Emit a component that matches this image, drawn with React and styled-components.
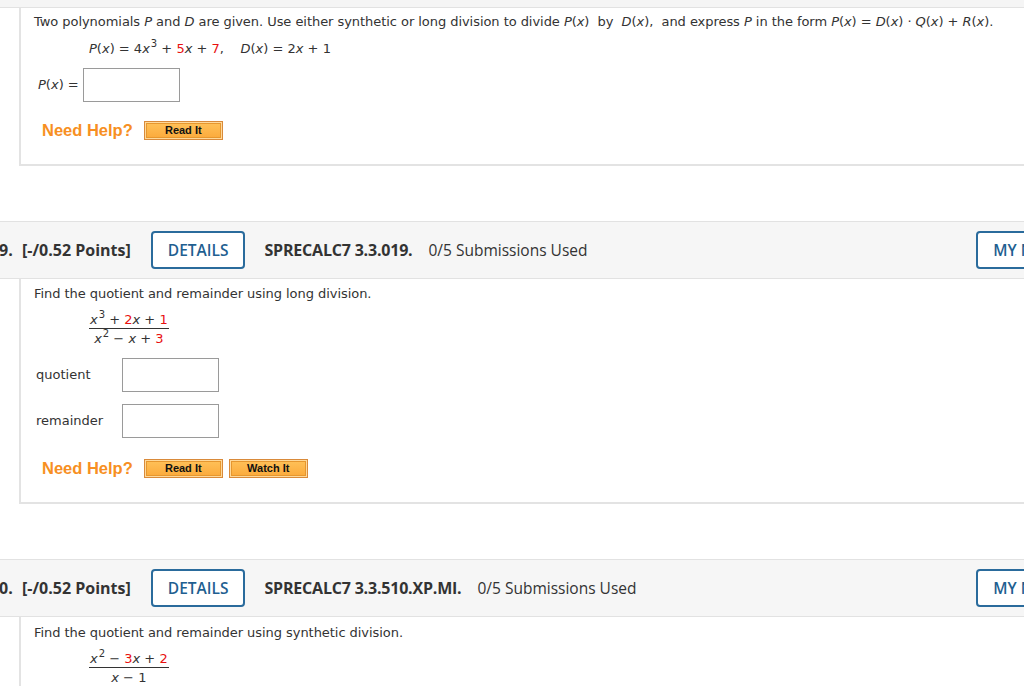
import React from "react"
import styled, { createGlobalStyle } from "styled-components"

const Global = createGlobalStyle`
  body {
    margin: 0;
    padding: 0;
    background: #fff;
    overflow: hidden;
    font-family: "DejaVu Sans", Verdana, sans-serif;
    color: #333;
  }
`

const Page = styled.div`
  width: 1024px;
  height: 687px;
  overflow: hidden;
`

const TopStrip = styled.div`
  height: 7px;
  background: #f5f5f5;
  border-bottom: 1px solid #e2e2e2;
`

const Card = styled.div`
  margin-left: 19px;
  border-left: 2px solid #e3e3e3;
  border-bottom: ${(p) => (p.$open ? "none" : "2px solid #e3e3e3")};
  padding: ${(p) => p.$pt || 5}px 0 ${(p) => (p.$open ? 0 : 24)}px 13px;
  margin-bottom: ${(p) => (p.$open ? 0 : 55)}px;
  font-size: 13px;
  line-height: 18px;
`

const Text = styled.div`
  white-space: nowrap;
  letter-spacing: -0.05px;
`

const Formula = styled.div`
  margin: 9px 0 0 55px;
  white-space: nowrap;
`

const V = styled.i`
  font-style: italic;
`

const Red = styled.span`
  color: #e8100f;
`

const Sup = styled.sup`
  font-size: 10px;
  line-height: 0;
  vertical-align: 6px;
  margin-left: 1px;
`

const Frac = styled.div`
  display: inline-flex;
  flex-direction: column;
  align-items: center;
  margin: ${(p) => p.$mt || 8}px 0 0 55px;
  line-height: 16px;
  white-space: nowrap;
`

const Num = styled.div`
  border-bottom: 1px solid #333;
  padding: 1px 1px 0;
`

const Den = styled.div`
  padding-top: 2px;
`

const AnswerRow = styled.div`
  display: flex;
  align-items: center;
  margin-top: ${(p) => p.$mt}px;
  margin-left: ${(p) => p.$ml || 2}px;
`

const Label = styled.span`
  width: ${(p) => (p.$w ? `${p.$w}px` : "auto")};
  margin-right: ${(p) => p.$gap || 0}px;
  font-size: 13px;
`

const Box = styled.div`
  width: 95px;
  height: 32px;
  border: 1px solid #9a9a9a;
  background: #fff;
`

const HelpRow = styled.div`
  display: flex;
  align-items: center;
  gap: 6px;
  margin: ${(p) => p.$mt}px 0 0 8px;
  height: 20px;
`

const NeedHelp = styled.span`
  font-family: "Liberation Sans", Arial, sans-serif;
  font-weight: 700;
  font-size: 16.5px;
  color: #f78f22;
  margin-right: 5px;
`

const HelpButton = styled.span`
  box-sizing: border-box;
  width: 79px;
  height: 19px;
  border: 1px solid #d98a3a;
  background: linear-gradient(#ffc25a, #fba93a);
  box-shadow: inset 0 0 0 1px #ffd99a, inset 0 0 0 2px #e6972f;
  display: flex;
  align-items: center;
  justify-content: center;
  font-family: "Liberation Sans", Arial, sans-serif;
  font-weight: 700;
  font-size: 11px;
  color: #111;
`

const Header = styled.div`
  box-sizing: border-box;
  height: 58px;
  background: #f6f6f6;
  border-top: 1px solid #e2e2e2;
  border-bottom: 1px solid #e2e2e2;
  display: flex;
  align-items: center;
  font-family: "Open Sans", sans-serif;
  font-size: 15.5px;
  color: #333;
  white-space: nowrap;
`

const QNum = styled.span`
  font-weight: 700;
  font-size: 16px;
  width: 23px;
  margin-left: -1px;
`

const Points = styled.span`
  font-weight: 700;
  font-size: 16px;
`

const OutlineButton = styled.span`
  box-sizing: border-box;
  height: 38px;
  padding: 0 15px;
  border: 2px solid #2a6b9c;
  border-radius: 4px;
  display: flex;
  align-items: center;
  color: #1f5f91;
  font-weight: 600;
  font-size: 15.5px;
  margin-left: ${(p) => p.$ml || 0};
  margin-right: ${(p) => p.$mr || 0};
  background: #fff;
`

const Code = styled.span`
  font-weight: 700;
  font-size: 16px;
  margin-left: 19px;
  letter-spacing: -0.2px;
`

const Subs = styled.span`
  margin-left: 16px;
`

function QuestionHeader({ num, code }) {
  return (
    <Header>
      <QNum>{num}</QNum>
      <Points>[-/0.52 Points]</Points>
      <OutlineButton $ml="20px">DETAILS</OutlineButton>
      <Code>{code}</Code>
      <Subs>0/5 Submissions Used</Subs>
      <OutlineButton $ml="auto" $mr="-64px">MY NOTES</OutlineButton>
    </Header>
  )
}

function Help({ mt, watch }) {
  return (
    <HelpRow $mt={mt}>
      <NeedHelp>Need Help?</NeedHelp>
      <HelpButton>Read It</HelpButton>
      {watch && <HelpButton>Watch It</HelpButton>}
    </HelpRow>
  )
}

function App() {
  return (
    <Page>
      <Global />
      <TopStrip />
      <Card>
        <Text>
          Two polynomials <V>P</V> and <V>D</V> are given. Use either synthetic or long division to divide&nbsp;
          <V>P</V>(<V>x</V>)&nbsp; by&nbsp; <V>D</V>(<V>x</V>),&nbsp; and express <V>P</V> in the form&nbsp;
          <V>P</V>(<V>x</V>) = <V>D</V>(<V>x</V>) · <V>Q</V>(<V>x</V>) + <V>R</V>(<V>x</V>).
        </Text>
        <Formula>
          <V>P</V>(<V>x</V>) = 4<V>x</V><Sup>3</Sup> + <Red>5</Red><V>x</V> + <Red>7</Red>,&nbsp;&nbsp;&nbsp;&nbsp;
          <V>D</V>(<V>x</V>) = 2<V>x</V> + 1
        </Formula>
        <AnswerRow $mt={10} $ml={4}>
          <Label $gap={4}>
            <V>P</V>(<V>x</V>) =
          </Label>
          <Box />
        </AnswerRow>
        <Help mt={18} />
      </Card>

      <QuestionHeader num="9." code="SPRECALC7 3.3.019." />
      <Card $pt={6}>
        <Text>Find the quotient and remainder using long division.</Text>
        <Frac>
          <Num>
            <V>x</V><Sup>3</Sup> + <Red>2</Red><V>x</V> + <Red>1</Red>
          </Num>
          <Den>
            <V>x</V><Sup>2</Sup> − <V>x</V> + <Red>3</Red>
          </Den>
        </Frac>
        <AnswerRow $mt={11}>
          <Label $w={86}>quotient</Label>
          <Box />
        </AnswerRow>
        <AnswerRow $mt={12}>
          <Label $w={86}>remainder</Label>
          <Box />
        </AnswerRow>
        <Help mt={20} watch />
      </Card>

      <QuestionHeader num="0." code="SPRECALC7 3.3.510.XP.MI." />
      <Card $pt={7} $open>
        <Text>Find the quotient and remainder using synthetic division.</Text>
        <Frac>
          <Num>
            <V>x</V><Sup>2</Sup> − <Red>3</Red><V>x</V> + <Red>2</Red>
          </Num>
          <Den>
            <V>x</V> − 1
          </Den>
        </Frac>
      </Card>
    </Page>
  )
}

export default App
